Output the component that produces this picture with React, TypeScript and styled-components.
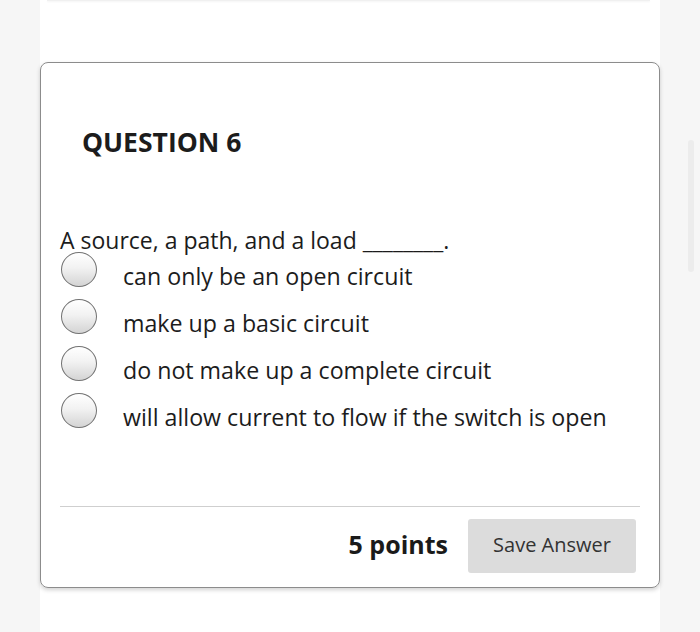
import React from "react";
import styled, { createGlobalStyle } from "styled-components";

const Global = createGlobalStyle`
  html, body { margin: 0; padding: 0; background: #f6f6f6; }
  body { font-family: "Open Sans", "Noto Sans", sans-serif; color: #1c1c1c; }
`;

const Page = styled.div`
  position: relative;
  width: 700px;
  height: 632px;
  overflow: hidden;
  background: #f6f6f6;
`;

const Column = styled.div`
  margin: 0 40px;
  height: 632px;
  background: #fff;
  display: flex;
  flex-direction: column;
`;

const PrevCardEdge = styled.div`
  height: 1px;
  margin: 0 10px 0 7px;
  background: #f0f0f0;
  box-shadow: 0 1px 2px rgba(0, 0, 0, 0.06);
`;

const Card = styled.section`
  margin-top: 61px;
  height: 526px;
  box-sizing: border-box;
  border: 1.5px solid #8c8c8c;
  border-radius: 8px;
  box-shadow: 0 2px 4px rgba(0, 0, 0, 0.18);
  display: flex;
  flex-direction: column;
  padding: 0 19px;
`;

const Title = styled.h2`
  margin: 62px 0 0 22px;
  font-size: 26.5px;
  font-weight: 700;
  line-height: 34px;
  color: #1c1c1c;
`;

const Prompt = styled.p`
  margin: 66px 0 0 0;
  font-size: 23px;
  line-height: 30px;
  color: #1c1c1c;
`;

const Options = styled.div`
  display: flex;
  flex-direction: column;
  gap: 11px;
  margin-top: 6px;
`;

const Option = styled.label`
  display: flex;
  align-items: flex-start;
  height: 36px;
`;

const Radio = styled.span`
  width: 36px;
  height: 35px;
  margin: -9px 0 0 1px;
  box-sizing: border-box;
  border: 1.5px solid #727272;
  border-radius: 50%;
  background: linear-gradient(180deg, #ffffff 0%, #f2f2f2 45%, #d4d4d4 100%);
  flex: none;
`;

const OptionText = styled.span`
  margin-left: 26px;
  font-size: 23.2px;
  line-height: 30px;
  color: #1c1c1c;
`;

const Divider = styled.hr`
  margin: auto 0 0 0;
  border: none;
  border-top: 1.5px solid #cfcfcf;
`;

const Footer = styled.div`
  display: flex;
  justify-content: flex-end;
  align-items: center;
  gap: 20px;
  padding: 12px 4px 14px 0;
`;

const Points = styled.span`
  font-size: 25px;
  font-weight: 700;
  color: #1a1a1a;
  margin-bottom: 5px;
`;

const SaveButton = styled.button`
  width: 168px;
  height: 54px;
  padding: 0 0 4px 0;
  border: none;
  border-radius: 3px;
  background: #dcdcdc;
  font-family: "Open Sans", sans-serif;
  font-size: 20px;
  color: #333;
`;

const Scrollbar = styled.div`
  position: absolute;
  left: 688px;
  top: 140px;
  width: 6px;
  height: 132px;
  border-radius: 3px;
  background: #ececec;
`;

const options = [
  "can only be an open circuit",
  "make up a basic circuit",
  "do not make up a complete circuit",
  "will allow current to flow if the switch is open",
];

export default function App() {
  return (
    <Page>
      <Global />
      <Column>
        <PrevCardEdge />
        <Card>
          <Title>QUESTION 6</Title>
          <Prompt>A source, a path, and a load ________.</Prompt>
          <Options>
            {options.map((o) => (
              <Option key={o}>
                <Radio />
                <OptionText>{o}</OptionText>
              </Option>
            ))}
          </Options>
          <Divider />
          <Footer>
            <Points>5 points</Points>
            <SaveButton>Save Answer</SaveButton>
          </Footer>
        </Card>
      </Column>
      <Scrollbar />
    </Page>
  );
}
